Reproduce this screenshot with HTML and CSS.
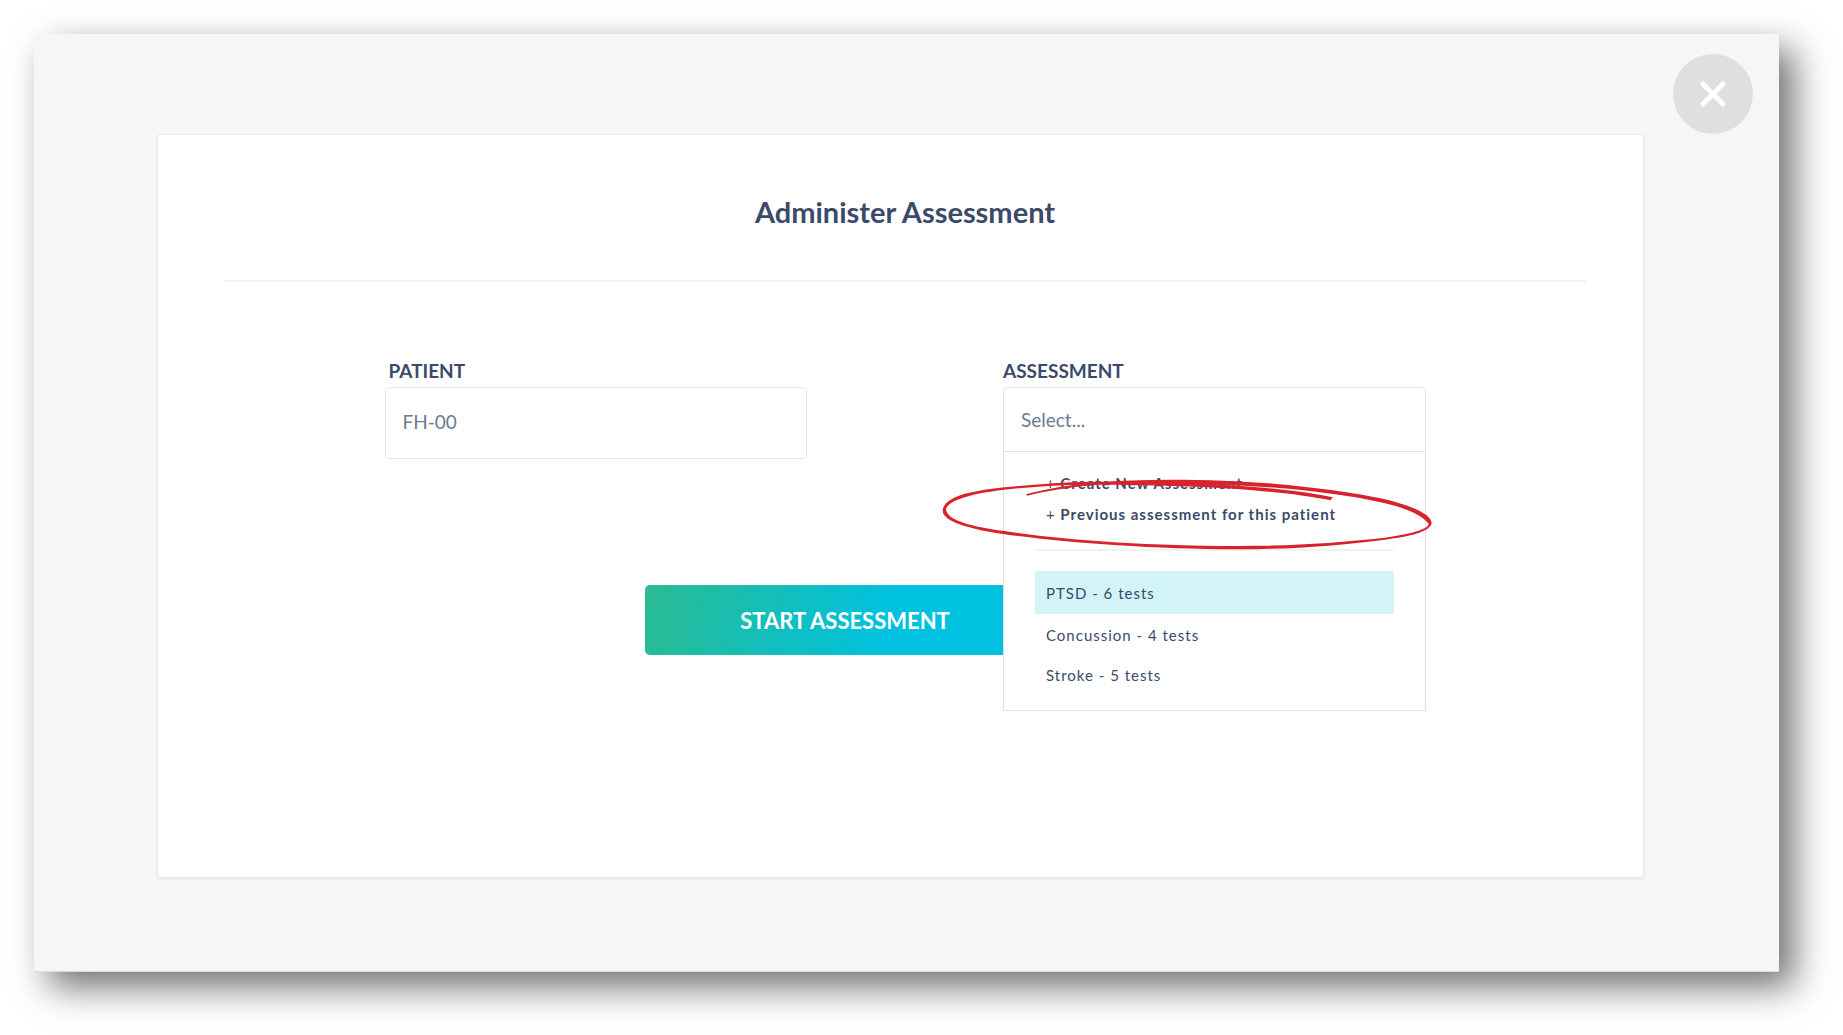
FILE: index.html
```html
<!DOCTYPE html>
<html lang="en">
<head>
    <meta charset="UTF-8">
    <meta name="viewport" content="width=device-width, initial-scale=1.0">
    <title>Administer Assessment</title>
    <link rel="stylesheet" href="styles.css">
</head>
<body>

    <div class="stage">
        <header class="topbar">
            <button class="close" type="button" aria-label="Close">
                <svg viewBox="0 0 28 28" width="28" height="28"><path d="M4 4L24 24M24 4L4 24"/></svg>
            </button>
        </header>

        <main class="card">
            <h1>Administer Assessment</h1>

            <form class="form">
                <div class="fields">
                    <div class="field">
                        <label class="inset" for="patient">PATIENT</label>
                        <input id="patient" type="text" value="FH-00">
                    </div>

                    <div class="field">
                        <label for="assessment">ASSESSMENT</label>
                        <div class="dropdown">
                            <select id="assessment">
                                <option>Select...</option>
                            </select>

                            <!-- Open dropdown menu -->
                            <div class="menu">
                                <button class="action" type="button"><span class="plus">+</span> Create New Assessment</button>
                                <button class="action" type="button"><span class="plus">+</span> Previous assessment for this patient</button>
                                <hr>
                                <button class="option selected" type="button">PTSD - 6 tests</button>
                                <button class="option" type="button">Concussion - 4 tests</button>
                                <button class="option" type="button">Stroke - 5 tests</button>
                            </div>

                            <!-- Hand drawn circle around the second action -->
                            <svg class="marker" viewBox="30 408 1482 231" aria-hidden="true">
                                <path d="M289 462C420 428 560 419 720 419C900 419 1060 430 1203 450C1270 459 1320 468 1365 478C1455 500 1505 525 1505 550C1500 575 1440 590 1365 599C1220 617 1080 628 920 628C660 628 400 607 223 583C90 562 38 538 38 512C42 470 120 453 223 442C300 434 400 426 480 425C800 424 1060 440 1208 472L1202 481C1050 450 800 434 480 434C400 434 310 440 223 449C120 461 50 482 48 510C54 540 120 560 223 573C400 600 660 618 920 618C1080 618 1220 609 1365 593C1440 583 1494 568 1496 552C1480 528 1430 505 1365 490C1320 478 1270 470 1203 461C1060 442 900 431 720 431C560 427 420 436 291 467Z"/>
                            </svg>
                        </div>
                    </div>
                </div>

                <button class="start" type="button">START ASSESSMENT</button>
            </form>
        </main>
    </div>

</body>
</html>
```
FILE: styles.css
```css
* { box-sizing: border-box; }
body { margin: 0; padding: 34px 64px 63px 34px; min-height: 100vh; display: flex; background: #fff; color: #3b4a69; font-family: Lato, sans-serif; }
button, input, select { font-family: inherit; color: inherit; }

.stage { flex: 1; display: flex; flex-direction: column; background: #f4f6f8; border-bottom: 1px solid #d9dbdd; box-shadow: 15px 15px 34px rgba(0, 0, 0, 0.56); }

.topbar { display: flex; justify-content: flex-end; padding: 20px 26px 0; }
.close { display: flex; align-items: center; justify-content: center; width: 80px; height: 80px; padding: 0; border: 0; border-radius: 50%; background: #dedfe1; }
.close path { fill: none; stroke: #fff; stroke-width: 5; stroke-linecap: round; }

.card { flex: 1; margin: 0 135px 93px 123px; padding: 60px 57px 60px 66px; background: #fff; border: 1px solid #e9e9ea; border-radius: 4px; box-shadow: 0 1px 3px rgba(0, 0, 0, 0.08); }
h1 { margin: 0; padding-bottom: 51px; border-bottom: 2px solid #f2f2f2; font-size: 29px; line-height: 34px; font-weight: 700; text-align: center; }

.form { width: 1041px; max-width: 100%; margin: 77px auto 0; }
.fields { display: flex; gap: 196px; }
.field { flex: 1; }
label { display: block; margin-bottom: 4px; font-size: 19px; line-height: 24px; font-weight: 700; }
.inset { padding-left: 4px; }
input, select { display: block; width: 100%; height: 72px; padding: 0 17px 4px; border: 1px solid #e5e5e5; border-radius: 5px; background: #fff; color: #687c93; font-size: 19px; }
.dropdown { position: relative; }
select { height: 64px; padding-bottom: 0; border-bottom: 0; border-radius: 5px 5px 0 0; appearance: none; }

.menu { position: absolute; top: 100%; left: 0; right: 0; z-index: 1; padding: 15px 31px; border: 1px solid #e0e0e0; background: #fff; }
.menu button { display: block; width: 100%; padding: 0 11px; border: 0; background: none; text-align: left; font-size: 15px; letter-spacing: 1px; }
.menu .action { height: 31px; font-weight: 700; }
.plus { font-weight: 400; }
hr { margin: 20px 0; border: 0; border-top: 2px solid #f2f2f2; }
.menu .option { height: 40px; }
.menu .selected { height: 43px; margin-bottom: 1px; background: #d2f3f8; }

.marker { position: absolute; top: 89px; left: -63px; z-index: 2; width: 494px; height: 77px; fill: #d7232b; pointer-events: none; }

.start { display: block; width: 401px; height: 70px; margin: 126px 0 0 260px; border: 0; border-radius: 5px; background: linear-gradient(105deg, #2abb91, #00c1df 60%); color: #fff; font-size: 22px; font-weight: 700; }
```
